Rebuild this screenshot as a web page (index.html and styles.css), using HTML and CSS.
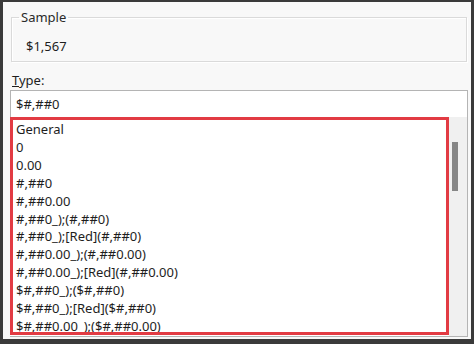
FILE: index.html
```html
<!DOCTYPE html>
<html>
<head>
<meta charset="utf-8">
<link rel="stylesheet" href="styles.css">
</head>
<body>
<div class="panel">
  <fieldset class="sample">
    <legend>Sample</legend>
    <div class="sample-value">$1,567</div>
  </fieldset>
  <div class="type-label"><span class="ul">T</span>ype:</div>
  <div class="type-input">$#,##0</div>
  <div class="listbox">
    <div class="items">
      <div class="item">General</div>
      <div class="item">0</div>
      <div class="item">0.00</div>
      <div class="item">#,##0</div>
      <div class="item">#,##0.00</div>
      <div class="item">#,##0_);(#,##0)</div>
      <div class="item">#,##0_);[Red](#,##0)</div>
      <div class="item">#,##0.00_);(#,##0.00)</div>
      <div class="item">#,##0.00_);[Red](#,##0.00)</div>
      <div class="item">$#,##0_);($#,##0)</div>
      <div class="item">$#,##0_);[Red]($#,##0)</div>
      <div class="item">$#,##0.00_);($#,##0.00)</div>
    </div>
    <div class="scrollbar"><div class="thumb"></div></div>
  </div>
</div>
</body>
</html>
```
FILE: styles.css
```css
html, body {
  margin: 0;
  padding: 0;
  background: #3a3a3a;
}
body {
  width: 474px;
  height: 344px;
  overflow: hidden;
  font-family: "Noto Sans", "Open Sans", sans-serif;
  font-size: 13px;
  color: #1e1e1e;
}
.panel {
  margin: 2px 3px 0 3px;
  height: 337px;
  box-sizing: border-box;
  padding: 6px 3px 0 7px;
  background: #f8f8f8;
  display: flex;
  flex-direction: column;
}
.sample {
  margin: 0 1px 0 1px;
  padding: 0 0 6px 7px;
  border: 1px solid #dadada;
  box-shadow: inset 1px 1px 0 #ffffff, 1px 1px 0 #ffffff;
  min-width: 0;
}
.sample legend {
  padding: 0 2px;
  line-height: 18px;
  color: #2a2a2a;
}
.sample-value {
  margin-top: 11px;
  padding-left: 7px;
  line-height: 18px;
}
.type-label {
  margin-top: 9px;
  padding-left: 2px;
  line-height: 18px;
}
.ul {
  text-decoration: underline;
}
.type-input {
  margin-top: 1px;
  height: 27px;
  box-sizing: border-box;
  border: 1px solid #b4b4b4;
  border-bottom: none;
  background: #ffffff;
  padding-left: 5px;
  line-height: 26px;
}
.listbox {
  height: 220px;
  display: flex;
  background: #ffffff;
  border-bottom: 1px solid #b4b4b4;
  box-sizing: border-box;
}
.items {
  width: 439px;
  height: 218px;
  box-sizing: border-box;
  border: 3px solid #e23b43;
  padding: 1px 0 0 3px;
  overflow: hidden;
}
.item {
  line-height: 17.9px;
  white-space: nowrap;
}
.scrollbar {
  flex: 1;
  background: #f0f0f0;
  border-right: 1px solid #b4b4b4;
  padding: 25px 0 0 3px;
}
.thumb {
  width: 6px;
  height: 49px;
  background: #868686;
}
```
